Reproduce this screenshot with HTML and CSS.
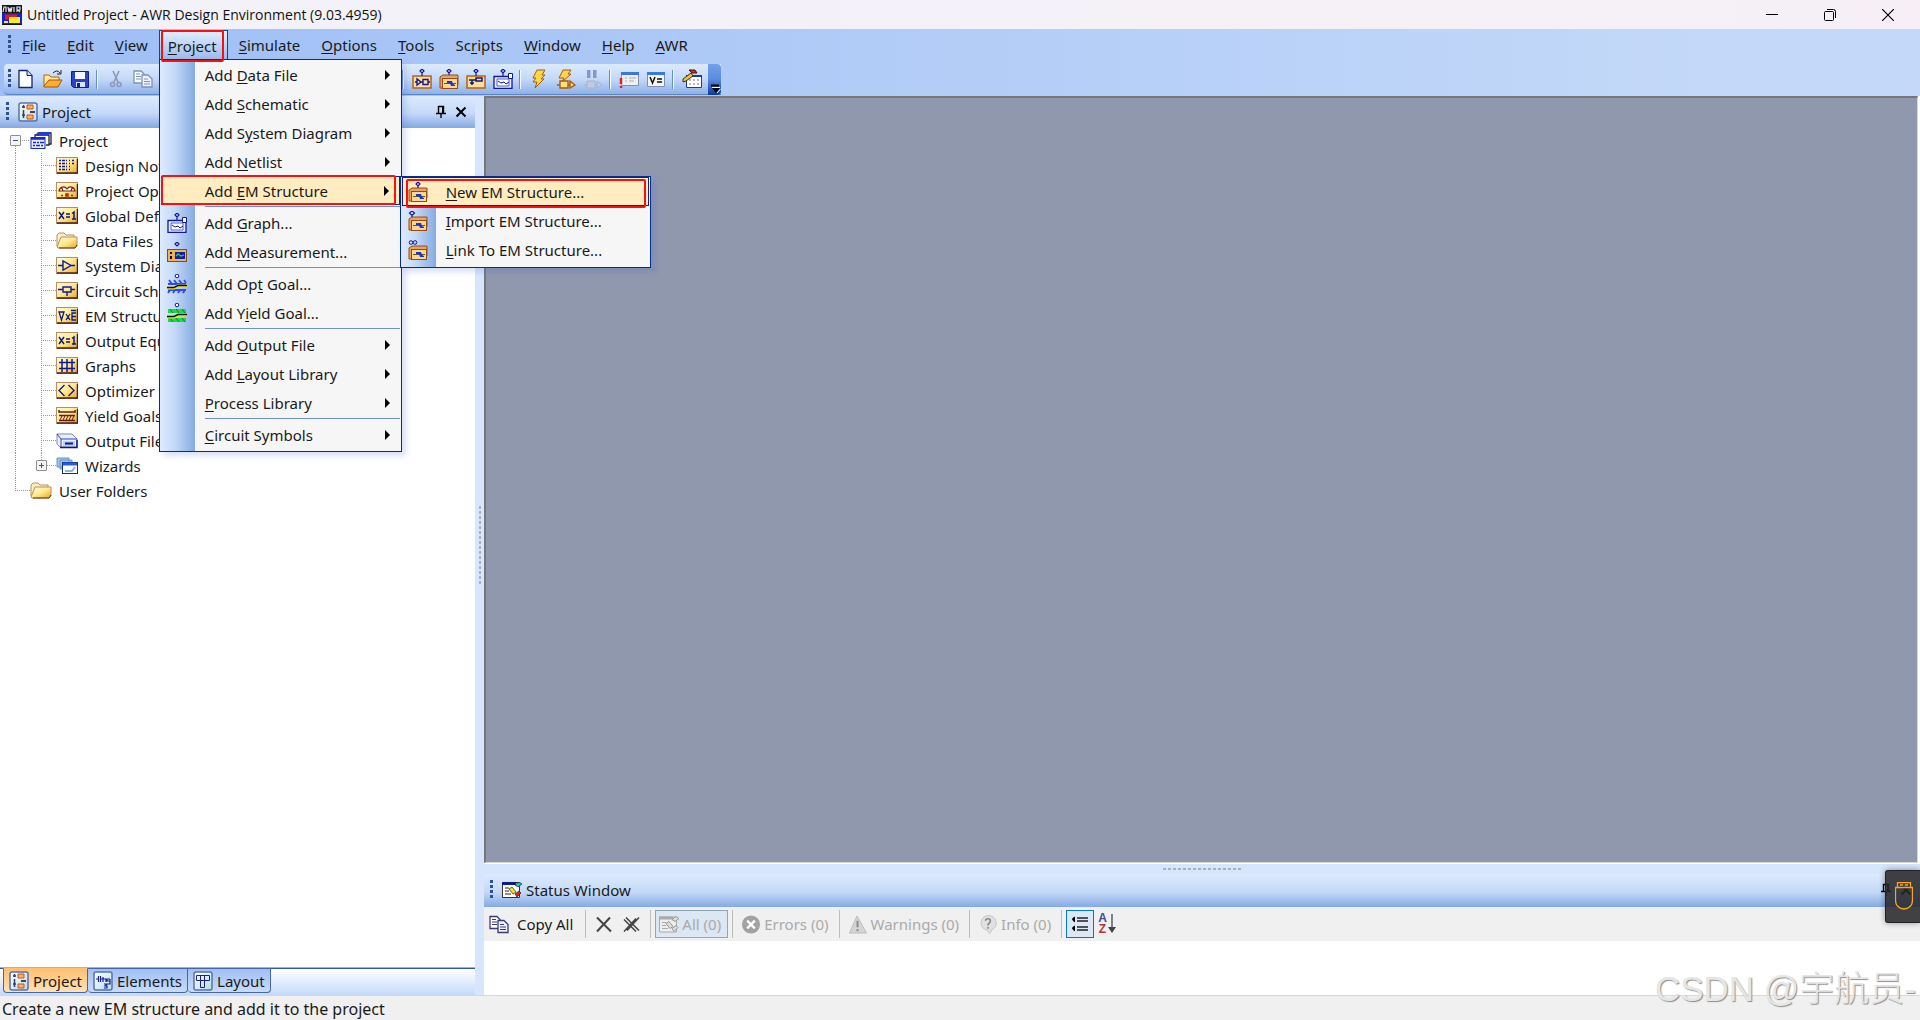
FILE: index.html
```html
<!DOCTYPE html>
<html lang="en">
<head>
    <meta charset="utf-8">
    <title>Untitled Project - AWR Design Environment (9.03.4959)</title>
    <link rel="stylesheet" href="styles.css">
</head>
<body>
    <!-- shared icons -->
    <svg class="symbols" aria-hidden="true">
        <defs>
            <linearGradient id="gold" x1="0" y1="0" x2="1" y2="1">
                <stop offset="0" stop-color="#fffce0"/>
                <stop offset="0.5" stop-color="#ffe98f"/>
                <stop offset="1" stop-color="#e8a52c"/>
            </linearGradient>
            <linearGradient id="steel" x1="0" y1="0" x2="1" y2="1">
                <stop offset="0" stop-color="#fff"/>
                <stop offset="1" stop-color="#b5dce8"/>
            </linearGradient>
        </defs>
        <symbol id="tile" viewBox="0 0 22 17">
            <rect x="0.5" y="0.5" width="21" height="16" fill="url(#gold)" stroke="#b98d62"/>
            <path d="M1 16h20.500V2" fill="none" stroke="#4a1c10" stroke-width="1.500"/>
        </symbol>
        <symbol id="project" viewBox="0 0 22 17">
            <path d="M8 4V1h13v11h-2M5 6V3h14v10h-3" fill="#fff" stroke="#223" stroke-width="1.300"/>
            <path d="M6 2.500h13M9 1h12" stroke="#2438d8" stroke-width="2"/>
            <rect x="1" y="5.500" width="14" height="11" fill="#e8eeff" stroke="#1a2ac8"/>
            <path d="M1 6.500h14" stroke="#1a2ac8" stroke-width="2.500"/>
            <path d="M3 10.500h3m1 0h2m1 0h4M3 13.500h2m1 0h4m1 0h2" stroke="#1a2ac8" stroke-width="1.500"/>
        </symbol>
        <symbol id="notes" viewBox="0 0 22 17">
            <use href="#tile"/>
            <path d="M3 3.500h2m1 0h3m1 0h1m2 0h1m2 0h2M3 6.500h2m1 0h3m1 0h1m2 0h1m2 0h2M3 9.500h2m1 0h3m1 0h1m2 0h1M3 12.500h2m1 0h3m1 0h1m2 0h1" stroke="#10189a" stroke-width="1.500"/>
        </symbol>
        <symbol id="options" viewBox="0 0 22 17">
            <use href="#tile"/>
            <path d="M3 9a4.500 5 0 0 1 8-2a4.500 5 0 0 1 8 2zM7 9l-1.500-4M15 9l1.500-4" fill="#fff" stroke="#7a2010" stroke-width="1.200"/>
            <path d="M5 13.500h2m3-1.500h2v2h-2zm5 1.500h2" fill="none" stroke="#a03010" stroke-width="1.500"/>
        </symbol>
        <symbol id="equation" viewBox="0 0 22 17">
            <use href="#tile"/>
            <path d="M3 5l5 7M8 5l-5 7M10 7h4M10 10h4M16 6.500l2-1.500v7M16 12h4" fill="none" stroke="#10187a" stroke-width="1.500"/>
        </symbol>
        <symbol id="folder" viewBox="0 0 22 17">
            <path d="M1 14V3l2-2h5l2 2h8v3" fill="#fff0c0" stroke="#b98d62"/>
            <path d="M1 15L5 5h16v9l-2 2H2z" fill="url(#gold)" stroke="#b98d62"/>
            <path d="M3 16h16l2-3" fill="none" stroke="#6a3410"/>
        </symbol>
        <symbol id="system" viewBox="0 0 22 17">
            <use href="#tile"/>
            <path d="M2 8.500h5m8 0h4M7 4v9l8-4.500z" fill="none" stroke="#10189a" stroke-width="1.400"/>
        </symbol>
        <symbol id="circuit" viewBox="0 0 22 17">
            <use href="#tile"/>
            <path d="M2 7.500h5m8 0h4M7 5h8v5H7zM11 10v4" fill="none" stroke="#10189a" stroke-width="1.400"/>
        </symbol>
        <symbol id="em" viewBox="0 0 22 17">
            <use href="#tile"/>
            <path d="M3 5h5l-2.500 8zM10 7l4 6M14 7l-4 6M20 6h-4v7h4M16 9.500h4M15 3.500h5" fill="none" stroke="#10187a" stroke-width="1.300"/>
        </symbol>
        <symbol id="graphs" viewBox="0 0 22 17">
            <use href="#tile"/>
            <path d="M3 5.500h16M3 11.500h16M6 2v13M11 2v13M16 2v13" stroke="#10189a" stroke-width="1.500"/>
        </symbol>
        <symbol id="optimizer" viewBox="0 0 22 17">
            <use href="#tile"/>
            <path d="M8.500 3L3 8.500 8.500 14M12.500 3l5.500 5.500-5.500 5.500" fill="none" stroke="#10187a" stroke-width="1.300"/>
        </symbol>
        <symbol id="yield" viewBox="0 0 22 17">
            <use href="#tile"/>
            <path d="M3 3v2h16V3M3 8.500h16M3 13.500h16" fill="none" stroke="#6a1a10" stroke-width="1.500"/>
            <path d="M4 13l2-4m1 4l2-4m1 4l2-4m1 4l2-4m1 4l2-4" fill="none" stroke="#6a1a10"/>
        </symbol>
        <symbol id="output" viewBox="0 0 22 17">
            <path d="M1 2h15l5 5v8H4L1 12z" fill="#e8f0ff" stroke="#7a86b8"/>
            <path d="M1 2l4 5h16M5 7v8" fill="none" stroke="#3048b8"/>
            <path d="M7 9h12v5H7z" fill="#b8d0f4"/>
            <path d="M4 15.500h17V8" fill="none" stroke="#10187a" stroke-width="1.500"/>
            <path d="M9 11.500h8" stroke="#10189a" stroke-width="2"/>
        </symbol>
        <symbol id="wizards" viewBox="0 0 22 17">
            <path d="M1 1h12v9H1zM4 3h12v9H4z" fill="#9fc4e8" stroke="#6f94c0"/>
            <rect x="6.500" y="5.500" width="15" height="11" fill="#fff" stroke="#10307a"/>
            <path d="M7 7h14" stroke="#2060e0" stroke-width="3"/>
            <path d="M9 14h7l3-4" fill="none" stroke="#8ab4e8" stroke-width="2"/>
        </symbol>
        <symbol id="panel" viewBox="0 0 20 20">
            <rect x="1" y="1" width="18" height="18" rx="2" fill="url(#steel)" stroke="#5a70b0" stroke-width="1.500"/>
            <path d="M5.500 3v3m0 2v8M4 5h3M4 13h3" stroke="#333c70" stroke-width="1.500"/>
            <path d="M9 3h6v4H9zM9 13h6v4H9z" fill="#f9b060" stroke="#c05a20"/>
            <path d="M12 10h5" stroke="#445" stroke-width="2"/>
        </symbol>
        <symbol id="elements" viewBox="0 0 20 20">
            <rect x="1" y="1" width="18" height="18" rx="2" fill="url(#steel)" stroke="#5a70b0" stroke-width="1.500"/>
            <path d="M3 8h2M5.500 5v6M7.500 5v6M8 8h2m0 3V6m0 2h3v3m4-3h-3v2h3V8v5h-3M11 13h3l-2 2h2v2h-3" fill="none" stroke="#1a2090" stroke-width="1.200"/>
        </symbol>
        <symbol id="layout" viewBox="0 0 20 20">
            <rect x="1" y="1" width="18" height="18" rx="2" fill="url(#steel)" stroke="#5a70b0" stroke-width="1.500"/>
            <path d="M3.500 4.500h13v5h-13zM7.500 4.500v12h4v-12" fill="none" stroke="#1a2090"/>
        </symbol>
        <symbol id="box" viewBox="0 0 20 20">
            <path d="M1 8l3-2h15v10l-3 3H1z" fill="#e8a468" stroke="#9a4a10"/>
            <rect x="3.500" y="9.500" width="15" height="10" fill="#ffd890" stroke="#9a4a10"/>
            <path d="M5 14.500h12" stroke="#5a5a30"/>
            <path d="M8 12h5l1 3 2 1v1h-4l-1-3H8z" fill="#1a30d8"/>
        </symbol>
        <symbol id="em-new" viewBox="0 0 20 20">
            <use href="#box"/>
            <path d="M10 0l2 2-2 2-2-2zM10 4v2" fill="#dfe8ff" stroke="#10189a" stroke-width="1.200"/>
        </symbol>
        <symbol id="em-import" viewBox="0 0 20 20">
            <use href="#box"/>
            <path d="M4 0l2.500 2L4 4.500 1.500 2zM4 4v2" fill="#dfe8ff" stroke="#10189a" stroke-width="1.200"/>
        </symbol>
        <symbol id="em-link" viewBox="0 0 20 20">
            <use href="#box"/>
            <circle cx="3" cy="2.500" r="1.800" fill="none" stroke="#10189a"/>
            <circle cx="7" cy="2.500" r="1.800" fill="none" stroke="#10189a"/>
        </symbol>
        <symbol id="graph" viewBox="0 0 20 20">
            <path d="M1 7.500h18v12H1z" fill="#e8f0ff" stroke="#10189a" stroke-width="1.300"/>
            <path d="M4 10h12v7H4z" fill="#fff" stroke="#4a60c0"/>
            <path d="M5 12l3 2 3-1 2 2 3-2" fill="none" stroke="#10189a"/>
            <path d="M15.500 4.500h4v5h-4z" fill="#fff" stroke="#10189a"/>
            <path d="M10 0l2 2-2 2-2-2zM10 4v3" fill="#dfe8ff" stroke="#10189a" stroke-width="1.200"/>
        </symbol>
        <symbol id="measure" viewBox="0 0 20 20">
            <rect x="0.500" y="7.500" width="19" height="12" fill="#f0b060" stroke="#8a4a10"/>
            <path d="M3 10h2v2H3zM3 14h2v3H3z" fill="#111"/>
            <rect x="8" y="10" width="10" height="7" fill="#1020a0"/>
            <path d="M9 14l2-2 3 2 3-1" fill="none" stroke="#20e060" stroke-width="1.300"/>
            <path d="M10 0l2 2-2 2-2-2z" fill="#dfe8ff" stroke="#10189a" stroke-width="1.200"/>
        </symbol>
        <symbol id="opt-goal" viewBox="0 0 20 20">
            <path d="M2 6l3 4M7 6l3 4M12 6l3 4M1 10h18M17 6l2 3M1 16h18M3 16l-2 3M8 16l-2 3M13 16l-2 3M18 16l-2 3" fill="none" stroke="#2a48ff" stroke-width="1.800"/>
            <path d="M0 14h7l4-2h9" fill="none" stroke="#f0e020" stroke-width="3"/>
            <path d="M0 13.500h7l4-2h9" fill="none" stroke="#111" stroke-width="1.500"/>
            <circle cx="10" cy="2" r="1.800" fill="#fff" stroke="#10189a"/>
        </symbol>
        <symbol id="yield-goal" viewBox="0 0 20 20">
            <path d="M1 6h18v4H1zM1 15h18v4H1z" fill="#12e040"/>
            <path d="M3 6l3 4m3-4l3 4m3-4l3 4M3 15l3 4m3-4l3 4m3-4l3 4" stroke="#1a7a40"/>
            <path d="M0 14h7l4-2h9" fill="none" stroke="#f0e020" stroke-width="3"/>
            <path d="M0 13.500h7l4-2h9" fill="none" stroke="#111" stroke-width="1.500"/>
            <circle cx="10" cy="2" r="1.800" fill="#fff" stroke="#10189a"/>
        </symbol>
        <symbol id="schematic" viewBox="0 0 20 20">
            <path d="M1 7h18v12H1z" fill="#ffdf98" stroke="#b8601c" stroke-width="1.500"/>
            <path d="M3 13h2m4 0h2M5 10v6l4-3zM11 10.500h5v5h-5zM16 13h2" fill="none" stroke="#10189a" stroke-width="1.400"/>
            <path d="M10 0l2 2-2 2-2-2zM10 4v3" fill="#dfe8ff" stroke="#10189a" stroke-width="1.200"/>
        </symbol>
        <symbol id="diagram" viewBox="0 0 20 20">
            <path d="M1 7h18v12H1z" fill="#ffdf98" stroke="#b8601c" stroke-width="1.500"/>
            <path d="M3 11h7M6 11v5M4 14h4M10 9h6v3h-6z" fill="none" stroke="#10187a" stroke-width="1.500"/>
            <path d="M10 0l2 2-2 2-2-2zM10 4v3" fill="#dfe8ff" stroke="#10189a" stroke-width="1.200"/>
        </symbol>
        <symbol id="pin" viewBox="0 0 12 14">
            <path d="M3.500 8V1.500h5V8M1 8.500h10M6 9v4" fill="none" stroke="#000" stroke-width="1.400"/>
            <path d="M8 1v7" stroke="#000" stroke-width="2"/>
        </symbol>
        <symbol id="close" viewBox="0 0 12 12">
            <path d="M1.500 1.500l9 9M10.500 1.500l-9 9" stroke="#000" stroke-width="2"/>
        </symbol>
        <symbol id="log" viewBox="0 0 20 16">
            <path d="M0.500 0.500h17v15H0.500z" fill="#fff" stroke="#333"/>
            <path d="M0 1.500h14" stroke="#10189a" stroke-width="3"/>
            <path d="M3 6h4M3 9h4M3 12h6" stroke="#222"/>
            <path d="M13 3l4-3 3 2-4 3z" fill="#10c8d0" stroke="#222" stroke-width="0.700"/>
            <path d="M7 7l3-2 4 5-3 2z" fill="#f0e020" stroke="#222" stroke-width="0.700"/>
            <path d="M13 12l4-3 2 2-4 4z" fill="#e02020" stroke="#222" stroke-width="0.700"/>
        </symbol>
        <symbol id="log-off" viewBox="0 0 20 16">
            <path d="M0.500 0.500h17v15H0.500z" fill="#eee" stroke="#aaa"/>
            <path d="M0 1.500h14" stroke="#aaa" stroke-width="3"/>
            <path d="M3 6h4M3 9h4M3 12h6" stroke="#aaa"/>
            <path d="M13 3l4-3 3 2-4 3zM7 7l3-2 4 5-3 2zM13 12l4-3 2 2-4 4z" fill="#ddd" stroke="#999"/>
        </symbol>
        <symbol id="copy" viewBox="0 0 20 18">
            <path d="M1 1h7l3 3v9H1z" fill="#fff" stroke="currentColor" stroke-width="1.300"/>
            <path d="M3 4h4M3 6.500h5M3 9h5" stroke="currentColor"/>
            <path d="M9 5h6l4 4v8H9z" fill="#eef2ff" stroke="currentColor" stroke-width="1.300"/>
            <path d="M11 9h4M11 11.500h6M11 14h6" stroke="currentColor"/>
        </symbol>
    </svg>

    <header class="titlebar">
        <svg class="app-icon" viewBox="0 0 20 20">
            <path d="M0 0h20v20H0z" fill="#10181c"/>
            <path d="M0 8h20v11H0z" fill="#1420d8"/>
            <path d="M1 7l1-5h2v5M6 2l1 5 1-4 1 4 1-5M12 7V2M15 7V2h3v3h-2l2 2" fill="none" stroke="#e8e8e8" stroke-width="1.200"/>
            <path d="M3 9.500h12v5H3z" fill="#e81818"/>
            <path d="M7 12h11v6H7z" fill="#f8f018"/>
            <path d="M2 17h4" stroke="#f8f018" stroke-width="2"/>
        </svg>
        <span class="title">Untitled Project - AWR Design Environment (9.03.4959)</span>
        <div class="window-buttons">
            <button aria-label="Minimize"><svg width="12" height="12" viewBox="0 0 12 12"><path d="M0 5.500h12" stroke="#000"/></svg></button>
            <button aria-label="Restore"><svg width="12" height="12" viewBox="0 0 12 12"><rect x="0.500" y="2.500" width="9" height="9" rx="1" fill="none" stroke="#000"/><path d="M3 0.500h6.500a2 2 0 0 1 2 2V9" fill="none" stroke="#000"/></svg></button>
            <button aria-label="Close"><svg width="12" height="12" viewBox="0 0 12 12"><path d="M0 0l12 12M12 0L0 12" stroke="#000" stroke-width="1.200"/></svg></button>
        </div>
    </header>

    <div class="bars">
        <nav class="menubar">
            <span class="grip"></span>
            <button><u>F</u>ile</button>
            <button><u>E</u>dit</button>
            <button><u>V</u>iew</button>
            <div class="menu-open">
                <button class="open"><u>P</u>roject</button>
                <span class="mark mark-top"></span>
                <ul class="menu">
                    <li><button class="has-sub">Add <u>D</u>ata File</button></li>
                    <li><button class="has-sub">Add <u>S</u>chematic</button></li>
                    <li><button class="has-sub">Add S<u>y</u>stem Diagram</button></li>
                    <li><button class="has-sub">Add <u>N</u>etlist</button></li>
                    <li class="parent">
                        <button class="has-sub active">Add <u>E</u>M Structure</button>
                        <span class="mark mark-item"></span>
                        <ul class="menu submenu">
                            <li>
                                <button class="active"><svg class="menu-icon"><use href="#em-new"/></svg><u>N</u>ew EM Structure...</button>
                                <span class="mark mark-sub"></span>
                            </li>
                            <li><button><svg class="menu-icon"><use href="#em-import"/></svg><u>I</u>mport EM Structure...</button></li>
                            <li><button><svg class="menu-icon"><use href="#em-link"/></svg><u>L</u>ink To EM Structure...</button></li>
                        </ul>
                    </li>
                    <li class="line"></li>
                    <li><button><svg class="menu-icon"><use href="#graph"/></svg>Add <u>G</u>raph...</button></li>
                    <li><button><svg class="menu-icon"><use href="#measure"/></svg>Add <u>M</u>easurement...</button></li>
                    <li class="line"></li>
                    <li><button><svg class="menu-icon"><use href="#opt-goal"/></svg>Add Op<u>t</u> Goal...</button></li>
                    <li><button><svg class="menu-icon"><use href="#yield-goal"/></svg>Add Y<u>i</u>eld Goal...</button></li>
                    <li class="line"></li>
                    <li><button class="has-sub">Add <u>O</u>utput File</button></li>
                    <li><button class="has-sub">Add <u>L</u>ayout Library</button></li>
                    <li><button class="has-sub"><u>P</u>rocess Library</button></li>
                    <li class="line"></li>
                    <li><button class="has-sub"><u>C</u>ircuit Symbols</button></li>
                </ul>
            </div>
            <button><u>S</u>imulate</button>
            <button><u>O</u>ptions</button>
            <button><u>T</u>ools</button>
            <button>Sc<u>r</u>ipts</button>
            <button><u>W</u>indow</button>
            <button><u>H</u>elp</button>
            <button><u>A</u>WR</button>
        </nav>

        <div class="toolbar">
            <span class="grip"></span>
            <div class="tools">
                <button aria-label="New"><svg viewBox="0 0 20 20"><path d="M3 1.500h8l5 5v12H3z" fill="#fff" stroke="#18207a" stroke-width="1.300"/><path d="M11 1.500v5h5" fill="#cdd8f4" stroke="#18207a"/></svg></button>
                <button aria-label="Open"><svg viewBox="0 0 20 20"><path d="M1 17V6h5l2 2h8v3" fill="#ffe8a0" stroke="#b06010"/><path d="M1 17l5-6h13l-4 7H1z" fill="#f9b030" stroke="#a85010"/><path d="M10 4q4-4 7 0m1-3v4h-4" fill="none" stroke="#222"/></svg></button>
                <button aria-label="Save"><svg viewBox="0 0 20 20"><path d="M1.500 2.500h17v16h-15l-2-2z" fill="#2a44c8" stroke="#18207a"/><path d="M5 3h10v7H5z" fill="#f4f8ff"/><path d="M6 13h9v5H6z" fill="#d8e4ff"/><path d="M7 14h3v4H7z" fill="#18207a"/></svg></button>
                <span class="divider"></span>
                <button aria-label="Cut"><svg viewBox="0 0 20 20"><path d="M7 2l5 11M13 2L8 13" stroke="#8a97b8" stroke-width="1.600"/><circle cx="6.500" cy="15.500" r="2" fill="none" stroke="#8a97b8" stroke-width="1.500"/><circle cx="13" cy="15.500" r="2" fill="none" stroke="#8a97b8" stroke-width="1.500"/></svg></button>
                <button aria-label="Copy" class="faded"><svg><use href="#copy"/></svg></button>
            </div>
            <div class="tools tools-right">
                <span class="divider"></span>
                <button aria-label="New schematic"><svg><use href="#schematic"/></svg></button>
                <button aria-label="New EM structure"><svg><use href="#em-new"/></svg></button>
                <button aria-label="New system diagram"><svg><use href="#diagram"/></svg></button>
                <button aria-label="New graph"><svg><use href="#graph"/></svg></button>
                <span class="divider"></span>
                <button aria-label="Analyze"><svg viewBox="0 0 20 20"><path d="M8 1h8l-3 5h3l-4 4h3L6 19l2-6H4l3-4H4z" fill="#ffd848" stroke="#a85a10"/></svg></button>
                <button aria-label="Simulate system"><svg viewBox="0 0 20 20"><path d="M7 1h8l-3 4h3L6 13l2-4H3z" fill="#ffd848" stroke="#a85a10"/><path d="M1 16h3m8 0h2m-10-4h8v7H4zM14 12l5 4-5 3z" fill="#ffe070" stroke="#a85a10" stroke-width="1.400"/></svg></button>
                <button aria-label="Pause"><svg viewBox="0 0 20 20"><path d="M4 1h3.500v8H4zM10 1h3.500v8H10z" fill="#8497c6"/><path d="M1 16h3m8 0h2m-10-4h8v7H4zM14 12l5 4-5 3z" fill="#c0cbe0" stroke="#a4b3d0"/></svg></button>
                <span class="divider"></span>
                <button aria-label="Status"><svg viewBox="0 0 20 20"><path d="M2.500 3.500h17v13h-17z" fill="#eef0f4" stroke="#8090b0"/><path d="M2 4.500h18" stroke="#3a78e0" stroke-width="3"/><path d="M6 9h2m2 0h7M6 12h2m2 0h5" stroke="#aaa"/><path d="M2 9v6m0 2v2" stroke="#e02020" stroke-width="2.500"/></svg></button>
                <button aria-label="Variables"><svg viewBox="0 0 20 20"><path d="M1.500 3.500h17v14h-17z" fill="#f4f4f0" stroke="#8090b0"/><path d="M1 4.500h18" stroke="#3a78e0" stroke-width="3"/><path d="M4 8l2.500 6L9 8M11 10h5M11 13h5" fill="none" stroke="#111" stroke-width="1.500"/></svg></button>
                <span class="divider"></span>
                <button aria-label="Layout tools"><svg viewBox="0 0 20 20"><path d="M4.500 6.500h15v12h-15z" fill="#fff" stroke="#223a90"/><path d="M4 7h16" stroke="#223a90" stroke-width="2"/><path d="M7 11h2m2 0h2m2 0h2M7 15h2m2 0h2m2 0h2" stroke="#9aa" stroke-width="1.500"/><path d="M1 10l8-6 2 3-7 5-3 1z" fill="#f0c040" stroke="#333"/><path d="M7 1h6l2 3h-5z" fill="#c83018" stroke="#501008"/></svg></button>
            </div>
            <button class="overflow" aria-label="Toolbar options"><svg width="10" height="10" viewBox="0 0 10 10"><path d="M0 1.500h8" stroke="#000" stroke-width="2"/><path d="M1 4h8L5 9z" fill="#000"/><path d="M1 3.500h8M9.500 5L6 9" stroke="#fff"/></svg></button>
        </div>
    </div>

    <main>
        <aside class="sidebar">
            <div class="panel-head">
                <span class="grip"></span>
                <svg class="icon20"><use href="#panel"/></svg>
                <span>Project</span>
                <div class="panel-buttons">
                    <button aria-label="Auto hide"><svg width="12" height="14"><use href="#pin"/></svg></button>
                    <button aria-label="Close panel"><svg width="12" height="12"><use href="#close"/></svg></button>
                </div>
            </div>
            <ul class="tree">
                <li><span class="guide root-guide"><i class="expander"></i></span><svg><use href="#project"/></svg>Project</li>
                <li><span class="guide trunk"></span><span class="guide branch"></span><svg><use href="#notes"/></svg>Design Notes</li>
                <li><span class="guide trunk"></span><span class="guide branch"></span><svg><use href="#options"/></svg>Project Options</li>
                <li><span class="guide trunk"></span><span class="guide branch"></span><svg><use href="#equation"/></svg>Global Definitions</li>
                <li><span class="guide trunk"></span><span class="guide branch"></span><svg><use href="#folder"/></svg>Data Files</li>
                <li><span class="guide trunk"></span><span class="guide branch"></span><svg><use href="#system"/></svg>System Diagrams</li>
                <li><span class="guide trunk"></span><span class="guide branch"></span><svg><use href="#circuit"/></svg>Circuit Schematics</li>
                <li><span class="guide trunk"></span><span class="guide branch"></span><svg><use href="#em"/></svg>EM Structures</li>
                <li><span class="guide trunk"></span><span class="guide branch"></span><svg><use href="#equation"/></svg>Output Equations</li>
                <li><span class="guide trunk"></span><span class="guide branch"></span><svg><use href="#graphs"/></svg>Graphs</li>
                <li><span class="guide trunk"></span><span class="guide branch"></span><svg><use href="#optimizer"/></svg>Optimizer Goals</li>
                <li><span class="guide trunk"></span><span class="guide branch"></span><svg><use href="#yield"/></svg>Yield Goals</li>
                <li><span class="guide trunk"></span><span class="guide branch"></span><svg><use href="#output"/></svg>Output Files</li>
                <li><span class="guide trunk"></span><span class="guide branch last"><i class="expander plus"></i></span><svg><use href="#wizards"/></svg>Wizards</li>
                <li><span class="guide branch last"></span><svg><use href="#folder"/></svg>User Folders</li>
            </ul>
            <div class="tabs">
                <button class="selected"><svg class="icon20"><use href="#panel"/></svg>Project</button>
                <button><svg class="icon20"><use href="#elements"/></svg>Elements</button>
                <button><svg class="icon20"><use href="#layout"/></svg>Layout</button>
            </div>
        </aside>

        <div class="splitter"><span class="dots"></span></div>

        <section class="content">
            <div class="workspace"></div>
            <div class="splitter-row"><span class="dots"></span></div>
            <div class="panel-head status-head">
                <span class="grip"></span>
                <svg class="log-icon"><use href="#log"/></svg>
                <span>Status Window</span>
                <div class="panel-buttons">
                    <button aria-label="Auto hide"><svg width="12" height="14"><use href="#pin"/></svg></button>
                    <button aria-label="Close panel"><svg width="12" height="12"><use href="#close"/></svg></button>
                </div>
            </div>
            <div class="status-tools">
                <button class="copy"><svg><use href="#copy"/></svg>Copy All</button>
                <span class="rule"></span>
                <button aria-label="Delete"><svg viewBox="0 0 20 18"><path d="M3 2l14 14M16 2L3 16" stroke="#444" stroke-width="2"/></svg></button>
                <button aria-label="Delete all"><svg viewBox="0 0 20 18"><path d="M2 4l12 12M4 2l13 13M14 3L2 16M17 2L5 15" stroke="#444" stroke-width="1.500"/></svg></button>
                <span class="rule"></span>
                <button class="all" disabled><svg><use href="#log-off"/></svg>All (0)</button>
                <span class="rule"></span>
                <button disabled><svg viewBox="0 0 20 20"><circle cx="10" cy="10" r="9.500" fill="#a2a2a2"/><path d="M6 6l8 8M14 6l-8 8" stroke="#fff" stroke-width="2.500"/></svg>Errors (0)</button>
                <span class="rule"></span>
                <button disabled><svg viewBox="0 0 20 20"><path d="M9 1L1 19h18z" fill="#d4d4d4" stroke="#bbb"/><path d="M9.500 6v7m0 2v2" stroke="#888" stroke-width="2"/></svg>Warnings (0)</button>
                <span class="rule"></span>
                <button disabled><svg viewBox="0 0 20 20"><path d="M10 0.500a9 8 0 0 1 4 15l-2 4-3-3.500A9 8 0 0 1 10 0.500z" fill="#e0e0e0" stroke="#c4c4c4"/><path d="M7.500 6q0-2 2.500-2t2.500 2-2.500 4v1m0 1.500v2" fill="none" stroke="#888" stroke-width="1.700"/></svg>Info (0)</button>
                <span class="rule"></span>
                <button class="group" aria-label="Group"><svg viewBox="0 0 18 18"><path d="M4 2q-5 2 0 5M4 11q-5 2 0 5" fill="#000" stroke="#000"/><path d="M6 3h11M6 6h11M6 12h11M6 15h11" stroke="#222" stroke-width="1.500"/></svg></button>
                <button class="sort" aria-label="Sort"><span class="az"><b>A</b><b>Z</b></span><svg viewBox="0 0 8 20"><path d="M4 0v16" stroke="#444" stroke-width="1.300"/><path d="M0 13h8l-4 6z" fill="#444"/></svg></button>
            </div>
            <div class="log"></div>
        </section>
    </main>

    <footer class="statusbar">Create a new EM structure and add it to the project</footer>

    <button class="usb" aria-label="Device">
        <svg width="18" height="28" viewBox="0 0 18 28"><path d="M2.500 5.500v-5h13v5M0.500 5.500h17v13a8.500 8.500 0 0 1-17 0zM5 3h3m2 0h3" fill="none" stroke="#f8a51c" stroke-width="1.300"/></svg>
    </button>
    <div class="watermark">CSDN @宇航员-</div>
</body>
</html>
```
FILE: styles.css
```css
* {
    box-sizing: border-box;
}
body {
    margin: 0;
    height: 100vh;
    display: flex;
    flex-direction: column;
    overflow: hidden;
    position: relative;
    font-family: "Noto Sans", "Noto Sans CJK SC", sans-serif;
    font-size: 15px;
    line-height: 20px;
    color: #1a1a1a;
    background-color: #fff;
}
button {
    font: inherit;
    color: inherit;
    border: none;
    background: none;
    padding: 0;
    margin: 0;
}
ul {
    list-style: none;
    margin: 0;
    padding: 0;
}
u {
    text-underline-offset: 2px;
    text-decoration-thickness: 1px;
}
.symbols {
    position: absolute;
    width: 0;
    height: 0;
}

/* title bar */
.titlebar {
    height: 29px;
    flex: none;
    display: flex;
    align-items: center;
    gap: 5px;
    padding: 0 3px 0 2px;
    background: linear-gradient(to right, #f1f2f8, #f6f0f6);
    color: #111;
}
.title {
    font-family: "Open Sans", sans-serif;
    font-size: 14px;
}
.app-icon {
    width: 20px;
    height: 20px;
}
.window-buttons {
    margin-left: auto;
    display: flex;
}
.window-buttons button {
    width: 58px;
    height: 28px;
    display: flex;
    align-items: center;
    justify-content: center;
}

/* menu bar and tool bar */
.bars {
    height: 67px;
    flex: none;
    background: linear-gradient(to right, #9ebef5, #c4d9f9 90%);
}
.grip {
    width: 3px;
    height: 20px;
    flex: none;
    background: repeating-linear-gradient(#30518f 0 3px, transparent 3px 5px);
}
.menubar {
    display: flex;
    align-items: center;
    gap: 1px;
    height: 35px;
    padding: 1px 0 4px 8px;
}
.menubar > button {
    height: 30px;
    padding: 0 10px;
}
.menu-open {
    position: relative;
    height: 30px;
    z-index: 5;
}
.open {
    height: 30px;
    padding: 0 10px 0 8px;
    border: 1px solid #17429b;
    border-bottom: none;
    background: linear-gradient(#e3efff, #97b9ec);
}
.menu {
    position: absolute;
    top: 29px;
    left: 0;
    width: 243px;
    padding: 0 1px 2px;
    border: 1px solid #002d96;
    background: linear-gradient(to right, #deebfe, #c5daf8 14px, #86abe2 35px, #f6f6f6 35px);
    box-shadow: 4px 4px 6px rgba(60, 100, 200, 0.2);
}
.menu button {
    display: flex;
    align-items: center;
    width: 100%;
    height: 29px;
    padding-left: 44px;
    white-space: pre;
    text-align: left;
}
.menu .menu-icon {
    width: 20px;
    height: 20px;
    margin-left: -38px;
    margin-right: 18px;
}
.has-sub::after {
    content: "";
    margin-left: auto;
    margin-right: 10px;
    border-left: 5px solid #000;
    border-top: 5px solid transparent;
    border-bottom: 5px solid transparent;
}
.menu .active {
    border: 1px solid #1c1a8c;
    padding-left: 43px;
    background-color: #ffecc0;
}
.line {
    height: 3px;
    margin-left: 44px;
    padding-top: 1px;
}
.line::before {
    content: "";
    display: block;
    height: 1px;
    background-color: #6f8fcf;
}
.parent, .submenu li {
    position: relative;
}
.submenu {
    top: 0;
    left: 239px;
    width: 251px;
    padding: 0 1px 3px;
}
.mark {
    position: absolute;
    border: 2px solid #fb1010;
    border-radius: 2px;
    pointer-events: none;
    z-index: 3;
}
.mark-top {
    inset: 0 4px -2px 2px;
}
.mark-item {
    inset: -1px 4px 0 0;
}
.mark-sub {
    inset: 2px 3px -2px 4px;
}
.toolbar {
    display: flex;
    align-items: center;
    width: 717px;
    height: 31px;
    margin-left: 4px;
    padding-left: 4px;
    border-radius: 4px 0 0 4px;
    border-bottom: 1px solid #5a84c8;
    background: linear-gradient(#dceafe, #c4d9f8 50%, #8db1e8);
}
.tools {
    display: flex;
    align-items: center;
    margin-left: 1px;
}
.tools button {
    width: 27px;
    height: 24px;
    display: flex;
    align-items: center;
    justify-content: center;
}
.tools svg {
    width: 20px;
    height: 20px;
}
.tools-right {
    margin-left: auto;
    margin-right: 3px;
}
.faded {
    color: #7f90bb;
}
.divider {
    width: 2px;
    height: 19px;
    margin: 0 4px 0 3px;
    border-left: 1px solid #6a8ccb;
    border-right: 1px solid #f4f8ff;
}
.overflow {
    width: 13px;
    height: 31px;
    padding: 14px 0 0 2px;
    border-radius: 0 4px 4px 0;
    background: linear-gradient(#74a0ea, #5a8be0 50%, #083a9c);
}

/* panels */
main {
    flex: 1;
    min-height: 0;
    display: flex;
}
.sidebar {
    width: 475px;
    flex: none;
    display: flex;
    flex-direction: column;
}
.panel-head {
    height: 32px;
    flex: none;
    display: flex;
    align-items: center;
    padding: 0 4px 1px 6px;
    background: linear-gradient(#dceafe, #c4d9f8 55%, #84a9e3);
}
.status-head {
    height: 33px;
    padding-bottom: 2px;
}
.panel-head > svg {
    margin: 0 4px 0 9px;
}
.icon20 {
    width: 20px;
    height: 20px;
    flex: none;
}
.panel-buttons {
    display: flex;
    margin-left: auto;
}
.panel-buttons button {
    width: 20px;
    height: 20px;
    display: flex;
    align-items: center;
    justify-content: center;
}
.tree {
    flex: 1;
    overflow: hidden;
}
.tree li {
    display: flex;
    align-items: center;
    height: 25px;
    white-space: nowrap;
}
.tree svg {
    width: 22px;
    height: 17px;
    margin-right: 7px;
    flex: none;
}
.guide {
    width: 30px;
    height: 25px;
    flex: none;
    display: flex;
    align-items: center;
    padding-left: 10px;
    background-repeat: no-repeat;
}
.trunk {
    width: 26px;
    background-image: repeating-linear-gradient(#999 0 1px, transparent 1px 2px);
    background-size: 1px 25px;
    background-position: 15px 0;
}
.branch {
    background-image: repeating-linear-gradient(#999 0 1px, transparent 1px 2px), repeating-linear-gradient(to right, #999 0 1px, transparent 1px 2px);
    background-size: 1px 25px, 15px 1px;
    background-position: 15px 0, 15px 12px;
}
.last {
    background-size: 1px 13px, 15px 1px;
}
.root-guide {
    background-image: repeating-linear-gradient(#999 0 1px, transparent 1px 2px), repeating-linear-gradient(to right, #999 0 1px, transparent 1px 2px);
    background-size: 1px 8px, 8px 1px;
    background-position: 15px 18px, 22px 12px;
}
.expander {
    width: 11px;
    height: 11px;
    border: 1px solid #919191;
    border-radius: 1px;
    background: linear-gradient(#37549a, #37549a) center / 5px 1px no-repeat, #f4f4f4;
}
.plus {
    background: linear-gradient(#37549a, #37549a) center / 5px 1px no-repeat, linear-gradient(#37549a, #37549a) center / 1px 5px no-repeat, #f4f4f4;
}
.tabs {
    height: 28px;
    flex: none;
    display: flex;
    align-items: flex-start;
    padding-left: 3px;
    border-top: 1px solid #f0a850;
    background: linear-gradient(#33589c 0 1px, #fff 1px, #c4dafa);
}
.tabs button {
    display: flex;
    align-items: center;
    gap: 4px;
    height: 25px;
    padding: 0 5px;
    border: 1px solid #4566a8;
    border-left-width: 0;
    border-radius: 0 0 4px 4px;
    background: linear-gradient(#a0bff2, #c8dcfb);
}
.tabs .selected {
    border-left-width: 1px;
    border-top-color: #fdbf72;
    background: linear-gradient(#fdbf72, #ffe2b4);
}
.splitter {
    width: 9px;
    flex: none;
    display: flex;
    align-items: center;
    justify-content: center;
    background-color: #d7e6fc;
}
.splitter .dots {
    width: 2px;
    height: 79px;
    background: repeating-linear-gradient(#aab0bb 0 3px, transparent 3px 5px);
}
.content {
    flex: 1;
    min-width: 0;
    display: flex;
    flex-direction: column;
}
.workspace {
    flex: 1;
    margin-right: 2px;
    border: 1px solid #d8d8d4;
    border-top: 2px solid #75777c;
    border-left: 2px solid #75777c;
    background-color: #9098ae;
}
.splitter-row {
    height: 11px;
    flex: none;
    display: flex;
    align-items: center;
    justify-content: center;
    padding-bottom: 1px;
    border-top: 1px solid #fff;
    background-color: #d7e6fc;
}
.splitter-row .dots {
    width: 79px;
    height: 2px;
    background: repeating-linear-gradient(to right, #aab0bb 0 3px, transparent 3px 5px);
}
.log-icon {
    width: 20px;
    height: 16px;
}
.status-tools {
    height: 34px;
    flex: none;
    display: flex;
    align-items: center;
    padding-left: 1px;
    background-color: #f0f0f0;
}
.status-tools button {
    display: flex;
    align-items: center;
    height: 28px;
    gap: 3px;
    padding: 0 4px;
}
.status-tools svg {
    width: 20px;
    height: 19px;
    flex: none;
}
.status-tools button:disabled {
    padding-right: 6px;
    color: #aaa;
}
.status-tools .copy {
    gap: 8px;
    padding-right: 8px;
}
.copy svg {
    color: #3a3a78;
}
.rule {
    width: 1px;
    height: 28px;
    margin: 0 4px;
    background-color: #bdbdbd;
}
.status-tools .all {
    padding-left: 3px;
    border: 1px solid #92a5bd;
    background-color: #dbe7f2;
}
.status-tools .group {
    width: 28px;
    border: 1px solid #0078d7;
    background-color: #dce9f5;
}
.group svg {
    width: 18px;
    height: 18px;
}
.status-tools .sort {
    gap: 1px;
}
.sort svg {
    width: 8px;
    height: 20px;
}
.az {
    font-family: "Liberation Sans", sans-serif;
    font-size: 12px;
    line-height: 11px;
    color: #46469c;
}
.az b {
    display: block;
}
.az b + b {
    color: #b03434;
}
.log {
    height: 54px;
    flex: none;
    margin-left: 1px;
}
.statusbar {
    height: 25px;
    flex: none;
    padding: 3px 2px 0;
    border-top: 1px solid #d8d8d8;
    background-color: #f0f0f0;
    font-size: 16px;
}

/* floating device button and watermark */
.usb {
    position: absolute;
    right: 0;
    bottom: 97px;
    width: 35px;
    height: 53px;
    padding: 3px 0 0 2px;
    border: 1px solid #222;
    border-right: none;
    border-radius: 3px 0 0 3px;
    background-color: rgba(40, 40, 42, 0.88);
    box-shadow: 0 0 6px rgba(0, 0, 0, 0.4);
}
.watermark {
    position: absolute;
    right: 4px;
    bottom: 11px;
    font-family: "Liberation Sans", "Noto Sans CJK SC", sans-serif;
    font-size: 35px;
    font-weight: 300;
    line-height: 40px;
    color: #e6e6e6;
    text-shadow: 1px 1px 1px #8c8c8c;
}
```
